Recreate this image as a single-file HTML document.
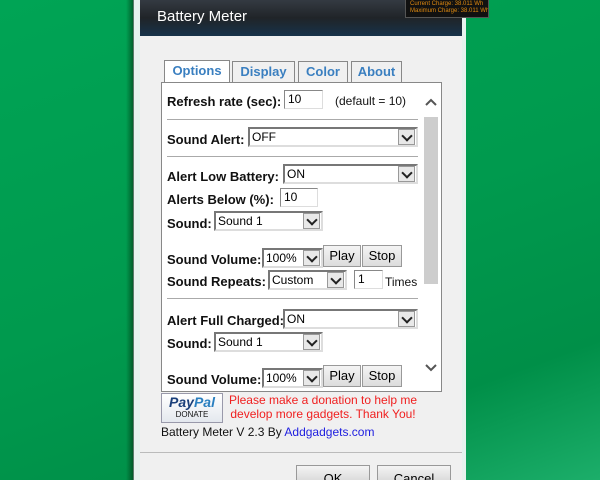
<!DOCTYPE html>
<html><head><style>
*{box-sizing:border-box;margin:0;padding:0}
html,body{width:600px;height:480px;overflow:hidden}
body{position:relative;font-family:"Liberation Sans",sans-serif;
background:linear-gradient(160deg,#00a455 0%,#009a4e 50%,#008f48 80%,#1cae6a 100%);}
.shadow{position:absolute;left:126px;top:0;width:8px;height:480px;background:linear-gradient(90deg,rgba(0,0,0,0),rgba(0,40,10,.6))}
.win{position:absolute;left:133px;top:0;width:333px;height:480px;background:#e6f2ee;border-left:1px solid #5a7a6a}
.hdr{position:absolute;left:140px;top:0;width:322px;height:36px;background:linear-gradient(#343a42 0%,#202428 50%,#17324a 100%)}
.hdr span{position:absolute;left:17px;top:8px;color:#fff;font-size:15px}
.body{position:absolute;left:140px;top:36px;width:322px;height:444px;background:#f0f0f0}
.gadget{position:absolute;left:405px;top:-2px;width:84px;height:20px;background:#111;border:1px solid #555;font-size:6px;color:#e08a10;line-height:7px;padding:2px 0 0 4px;white-space:nowrap;overflow:hidden}
.tab{position:absolute;top:61px;height:22px;border:1px solid #888;border-bottom:none;background:#f0f0f0;color:#3a7fc0;font-weight:bold;font-size:13px;text-align:center;line-height:20px}
.panel{position:absolute;left:161px;top:82px;width:281px;height:310px;border:1px solid #888;background:#fff;overflow:hidden}
.l{position:absolute;font-weight:bold;font-size:13px;color:#111}
.t{position:absolute;font-size:12px;color:#111}
.inp{position:absolute;border:1px solid #888;border-right-color:#ddd;border-bottom-color:#ddd;background:#fff;font-size:12px;padding-left:3px;line-height:17px;height:19px}
.sel{position:absolute;border:2px solid #777;border-right-color:#ddd;border-bottom-color:#ddd;background:#fff;font-size:12px;padding-left:2px;line-height:16px;height:20px}
.sel i{position:absolute;right:1px;top:0;width:17px;height:16px;background:#e8e8e8;border:1px solid #999}
.sel i:after{content:"";position:absolute;left:4px;top:2px;width:6px;height:6px;border-right:2px solid #222;border-bottom:2px solid #222;transform:rotate(45deg)}
.btn{position:absolute;border:1px solid #999;background:linear-gradient(#f4f4f4,#dcdcdc);font-size:13px;text-align:center;line-height:20px;height:22px}
.hr{position:absolute;left:5px;width:251px;height:1px;background:#aaa}
</style></head><body>
<div class="shadow"></div>
<div class="win"></div>
<div class="hdr"><span>Battery Meter</span></div>
<div class="body"></div>
<div class="gadget">Current Charge: 38.011 Wh<br>Maximum Charge: 38.011 Wh</div>
<div class="tab" style="left:164px;width:66px;top:60px;height:23px;background:#fff">Options</div>
<div class="tab" style="left:232px;width:63px">Display</div>
<div class="tab" style="left:298px;width:50px">Color</div>
<div class="tab" style="left:351px;width:51px">About</div>
<div class="panel">
 <div class="l" style="left:5px;top:11px">Refresh rate (sec):</div>
 <div class="inp" style="left:122px;top:7px;width:39px">10</div>
 <div class="t" style="left:173px;top:11px">(default = 10)</div>
 <div class="hr" style="top:36px"></div>
 <div class="l" style="left:5px;top:49px">Sound Alert:</div>
 <div class="sel" style="left:86px;top:44px;width:170px">OFF<i></i></div>
 <div class="hr" style="top:73px"></div>
 <div class="l" style="left:5px;top:86px">Alert Low Battery:</div>
 <div class="sel" style="left:121px;top:81px;width:135px">ON<i></i></div>
 <div class="l" style="left:5px;top:109px">Alerts Below (%):</div>
 <div class="inp" style="left:118px;top:105px;width:38px">10</div>
 <div class="l" style="left:5px;top:133px">Sound:</div>
 <div class="sel" style="left:52px;top:128px;width:109px">Sound 1<i></i></div>
 <div class="l" style="left:5px;top:169px">Sound Volume:</div>
 <div class="sel" style="left:100px;top:165px;width:61px">100%<i></i></div>
 <div class="btn" style="left:161px;top:162px;width:38px">Play</div>
 <div class="btn" style="left:200px;top:162px;width:40px">Stop</div>
 <div class="l" style="left:5px;top:191px">Sound Repeats:</div>
 <div class="sel" style="left:106px;top:187px;width:79px">Custom<i></i></div>
 <div class="inp" style="left:192px;top:187px;width:29px">1</div>
 <div class="t" style="left:223px;top:192px">Times</div>
 <div class="hr" style="top:215px"></div>
 <div class="l" style="left:5px;top:230px">Alert Full Charged:</div>
 <div class="sel" style="left:121px;top:226px;width:135px">ON<i></i></div>
 <div class="l" style="left:5px;top:253px">Sound:</div>
 <div class="sel" style="left:52px;top:249px;width:109px">Sound 1<i></i></div>
 <div class="l" style="left:5px;top:289px">Sound Volume:</div>
 <div class="sel" style="left:100px;top:285px;width:61px">100%<i></i></div>
 <div class="btn" style="left:161px;top:282px;width:38px">Play</div>
 <div class="btn" style="left:200px;top:282px;width:40px">Stop</div>
 <div style="position:absolute;left:262px;top:34px;width:14px;height:167px;background:#cdcdcd"></div>
 <svg style="position:absolute;left:262px;top:14px" width="14" height="10"><polyline points="2,8 7,3 12,8" fill="none" stroke="#555" stroke-width="2"/></svg>
 <svg style="position:absolute;left:262px;top:280px" width="14" height="10"><polyline points="2,2 7,7 12,2" fill="none" stroke="#555" stroke-width="2"/></svg>
</div>
<div style="position:absolute;left:161px;top:393px;width:62px;height:30px;border:1px solid #99a;background:linear-gradient(#fff,#e4e8ee);text-align:center">
 <div style="font-style:italic;font-weight:bold;font-size:14px;color:#1a3f7a;line-height:16px">Pay<span style="color:#2a7fc0">Pal</span></div>
 <div style="font-size:8px;color:#111;line-height:10px">DONATE</div>
</div>
<div style="position:absolute;left:227px;top:393px;color:#f02020;font-size:12px;line-height:14px;text-align:center;width:192px">Please make a donation to help me<br>develop more gadgets. Thank You!</div>
<div style="position:absolute;left:161px;top:425px;font-size:12px;color:#111">Battery Meter V 2.3 By <span style="color:#2020e0">Addgadgets.com</span></div>
<div style="position:absolute;left:140px;top:452px;width:322px;height:1px;background:#bbb"></div>
<div class="btn" style="left:296px;top:465px;width:74px;height:15px;line-height:26px;border-bottom:none;overflow:hidden">OK</div>
<div class="btn" style="left:377px;top:465px;width:74px;height:15px;line-height:26px;border-bottom:none;overflow:hidden">Cancel</div>
</body></html>
